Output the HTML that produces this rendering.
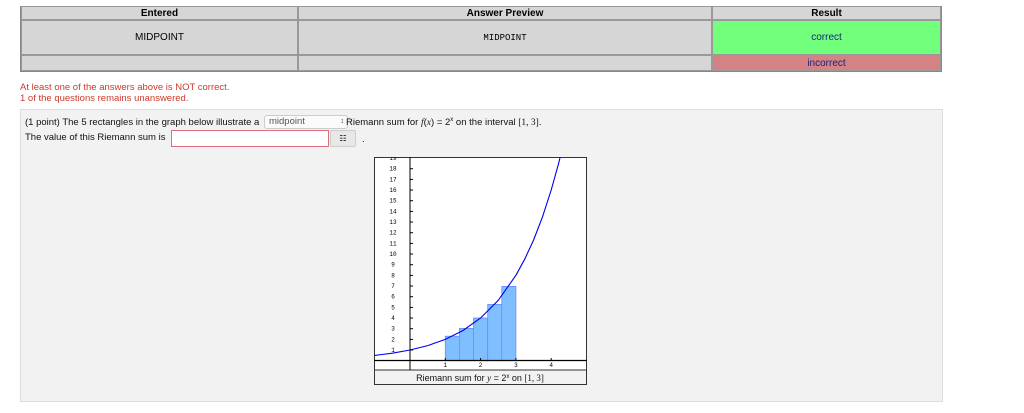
<!DOCTYPE html>
<html><head><meta charset="utf-8"><style>
body{margin:0;background:#fff;font-family:"Liberation Sans",sans-serif;width:1024px;height:413px;position:relative;overflow:hidden}
table{position:absolute;left:20px;top:6px;width:922px;border-collapse:separate;border-spacing:0;border:1px solid #888;border-top:none;font-size:10px}
td,th{background:#d6d6d6;border:1px solid #999;text-align:center;padding:0}
th{height:12px;font-weight:bold}
.r2 td{height:33px}
.r3 td{height:14px}
.ok{background:#72ff7c;color:#1a237e}
.bad{background:#d48283;color:#1a237e}
.msg{position:absolute;left:20px;color:#cc3a2a;font-size:9.5px}
.box{position:absolute;left:20px;top:109px;width:921px;height:291px;background:#f2f2f2;border:1px solid #ddd}
.t{position:absolute;font-size:9.5px;color:#111;white-space:nowrap}
</style></head><body>
<table>
<tr><th style="width:275px">Entered</th><th style="width:412px">Answer Preview</th><th>Result</th></tr>
<tr class="r2"><td>MIDPOINT</td><td style="font-family:'Liberation Mono',monospace;font-size:9px">MIDPOINT</td><td class="ok">correct</td></tr>
<tr class="r3"><td></td><td></td><td class="bad">incorrect</td></tr>
</table>
<div class="msg" style="top:82px">At least one of the answers above is NOT correct.</div>
<div class="msg" style="top:93px">1 of the questions remains unanswered.</div>
<div class="box"></div>
<div class="t" style="left:25px;top:117px">(1 point) The 5 rectangles in the graph below illustrate a</div>
<div style="position:absolute;left:264px;top:115px;width:78px;height:12px;background:#fafafa;border:1px solid #ccc;border-radius:3px;font-size:9.5px;color:#555;padding-left:4px;line-height:12px">midpoint<span style="position:absolute;right:3px;font-size:7px;color:#333">&#x2195;</span></div>
<div class="t" style="left:346px;top:117px">Riemann sum for <i style="font-family:'Liberation Serif',serif">f</i>(<i style="font-family:'Liberation Serif',serif">x</i>) = 2<sup style="font-size:6px">x</sup> on the interval <span style="font-family:'Liberation Serif',serif">[1, 3]</span>.</div>
<div class="t" style="left:25px;top:132px">The value of this Riemann sum is</div>
<div style="position:absolute;left:171px;top:130px;width:156px;height:15px;background:#fff;border:1px solid #d9707a"></div>
<div style="position:absolute;left:330px;top:130px;width:24px;height:15px;background:#e8e8e8;border:1px solid #ccc;border-radius:2px;font-size:8px;text-align:center;line-height:15px">&#x2637;</div>
<div class="t" style="left:362px;top:134px">.</div>
<svg style="position:absolute;left:374px;top:157px" width="214" height="229" viewBox="0 0 214 229">
<rect x="0.5" y="0.5" width="212" height="227" fill="#fff" stroke="#333"/>
<rect x="1" y="213" width="211" height="14" fill="#f2f2f2"/>
<line x1="0" y1="213" x2="213" y2="213" stroke="#333"/>
<g fill="#80bfff" stroke="#6b8cff" stroke-width="0.8">
<rect x="71.3" y="179.2" width="14.1" height="24.5"/>
<rect x="85.4" y="171.4" width="14.1" height="32.3"/>
<rect x="99.5" y="161" width="14.2" height="42.7"/>
<rect x="113.7" y="147.4" width="14.1" height="56.3"/>
<rect x="127.8" y="129.4" width="14.1" height="74.3"/>
</g>
<line x1="0" y1="203.5" x2="213" y2="203.5" stroke="#000" stroke-width="1.3"/>
<line x1="36" y1="0" x2="36" y2="213" stroke="#000"/>
<polyline fill="none" stroke="#0000ee" stroke-width="1.1" points="0.7,198.4 18.4,196.2 36,193 53.7,188.6 71.3,182.4 89,173.5 106.6,161 124.3,143.3 141.9,118.3 150.7,102.2 159.6,83 168.4,60.2 177.2,33 184.3,7.6 186,0.7"/>
<g stroke="#000"><line x1="36" x2="39" y1="193" y2="193"/><line x1="36" x2="39" y1="182.4" y2="182.4"/><line x1="36" x2="39" y1="171.7" y2="171.7"/><line x1="36" x2="39" y1="161" y2="161"/><line x1="36" x2="39" y1="150.4" y2="150.4"/><line x1="36" x2="39" y1="139.7" y2="139.7"/><line x1="36" x2="39" y1="129" y2="129"/><line x1="36" x2="39" y1="118.4" y2="118.4"/><line x1="36" x2="39" y1="107.7" y2="107.7"/><line x1="36" x2="39" y1="97" y2="97"/><line x1="36" x2="39" y1="86.4" y2="86.4"/><line x1="36" x2="39" y1="75.7" y2="75.7"/><line x1="36" x2="39" y1="65" y2="65"/><line x1="36" x2="39" y1="54.4" y2="54.4"/><line x1="36" x2="39" y1="43.7" y2="43.7"/><line x1="36" x2="39" y1="33" y2="33"/><line x1="36" x2="39" y1="22.4" y2="22.4"/><line x1="36" x2="39" y1="11.7" y2="11.7"/>
<line x1="71.3" x2="71.3" y1="201" y2="204"/><line x1="106.6" x2="106.6" y1="201" y2="204"/><line x1="141.9" x2="141.9" y1="201" y2="204"/><line x1="177.2" x2="177.2" y1="201" y2="204"/></g>
<g font-family="Liberation Mono,monospace" font-size="6" text-anchor="middle" fill="#000">
<text x="19" y="195">1</text><text x="19" y="184.4">2</text><text x="19" y="173.7">3</text><text x="19" y="163">4</text><text x="19" y="152.4">5</text><text x="19" y="141.7">6</text><text x="19" y="131">7</text><text x="19" y="120.4">8</text><text x="19" y="109.7">9</text><text x="19" y="99">10</text><text x="19" y="88.4">11</text><text x="19" y="77.7">12</text><text x="19" y="67">13</text><text x="19" y="56.4">14</text><text x="19" y="45.7">15</text><text x="19" y="35">16</text><text x="19" y="24.4">17</text><text x="19" y="13.7">18</text><text x="19" y="3">19</text>
<text x="71.3" y="210">1</text><text x="106.6" y="210">2</text><text x="141.9" y="210">3</text><text x="177.2" y="210">4</text></g>
<text x="106" y="224" font-family="Liberation Sans,sans-serif" font-size="9" text-anchor="middle" fill="#111">Riemann sum for <tspan font-family="Liberation Serif,serif" font-style="italic">y</tspan> = 2<tspan font-size="6" dy="-3">x</tspan><tspan dy="3"> on </tspan><tspan font-family="Liberation Serif,serif">[1, 3]</tspan></text>
</svg>
</body></html>
